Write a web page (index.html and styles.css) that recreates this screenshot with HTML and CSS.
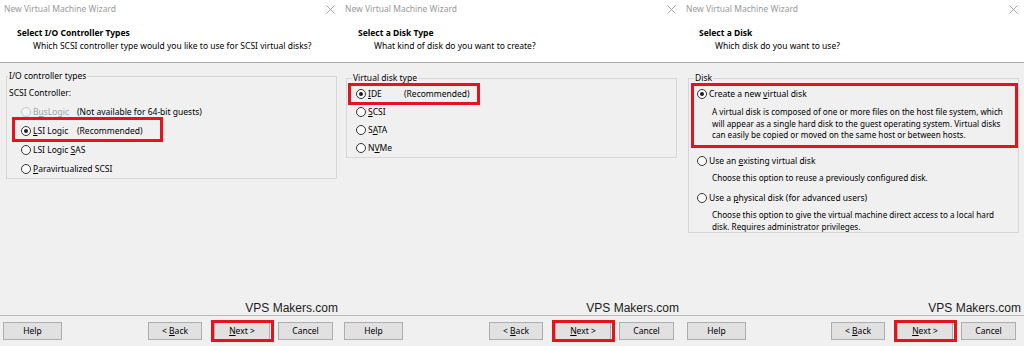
FILE: index.html
```html
<!DOCTYPE html>
<html>
<head>
<meta charset="utf-8">
<link rel="stylesheet" href="styles.css">
</head>
<body>
<div class="wizard">
  <section class="panel">
    <header class="head">
      <div class="titlebar"><span>New Virtual Machine Wizard</span><svg class="close" viewBox="0 0 9 9"><path d="M0.5 0.5L8.5 8.5M8.5 0.5L0.5 8.5" stroke="#8f8f8f" stroke-width="0.8" fill="none"/></svg></div>
      <h1>Select I/O Controller Types</h1>
      <p class="sub">Which SCSI controller type would you like to use for SCSI virtual disks?</p>
    </header>
    <main class="body">
      <fieldset class="group g-left">
        <legend>I/O controller types</legend>
        <div class="ctl-label">SCSI Controller:</div>
        <div class="row first disabled"><span class="rb"></span><span class="name">B<u>u</u>sLogic</span><span>(Not available for 64-bit guests)</span></div>
        <div class="row hl hl-lsi"><span class="rb on"></span><span class="name"><u>L</u>SI Logic</span><span>(Recommended)</span></div>
        <div class="row"><span class="rb"></span><span>LSI Logic <u>S</u>AS</span></div>
        <div class="row"><span class="rb"></span><span><u>P</u>aravirtualized SCSI</span></div>
      </fieldset>
    </main>
    <footer class="foot">
      <div class="brand">VPS Makers.com</div>
      <div class="bar">
        <button class="btn help">Help</button>
        <button class="btn back">&lt;&nbsp;<u>B</u>ack</button>
        <span class="hl hl-next"><button class="btn next"><u>N</u>ext&nbsp;&gt;</button></span>
        <button class="btn cancel">Cancel</button>
      </div>
    </footer>
  </section>

  <section class="panel">
    <header class="head">
      <div class="titlebar"><span>New Virtual Machine Wizard</span><svg class="close" viewBox="0 0 9 9"><path d="M0.5 0.5L8.5 8.5M8.5 0.5L0.5 8.5" stroke="#8f8f8f" stroke-width="0.8" fill="none"/></svg></div>
      <h1>Select a Disk Type</h1>
      <p class="sub">What kind of disk do you want to create?</p>
    </header>
    <main class="body mid">
      <fieldset class="group g-mid">
        <legend>Virtual disk type</legend>
        <div class="row first hl hl-ide"><span class="rb on"></span><span class="name"><u>I</u>DE</span><span>(Recommended)</span></div>
        <div class="row"><span class="rb"></span><span><u>S</u>CSI</span></div>
        <div class="row"><span class="rb"></span><span>S<u>A</u>TA</span></div>
        <div class="row"><span class="rb"></span><span>N<u>V</u>Me</span></div>
      </fieldset>
    </main>
    <footer class="foot">
      <div class="brand">VPS Makers.com</div>
      <div class="bar">
        <button class="btn help">Help</button>
        <button class="btn back">&lt;&nbsp;<u>B</u>ack</button>
        <span class="hl hl-next"><button class="btn next"><u>N</u>ext&nbsp;&gt;</button></span>
        <button class="btn cancel">Cancel</button>
      </div>
    </footer>
  </section>

  <section class="panel wide">
    <header class="head">
      <div class="titlebar"><span>New Virtual Machine Wizard</span><svg class="close" viewBox="0 0 9 9"><path d="M0.5 0.5L8.5 8.5M8.5 0.5L0.5 8.5" stroke="#8f8f8f" stroke-width="0.8" fill="none"/></svg></div>
      <h1>Select a Disk</h1>
      <p class="sub">Which disk do you want to use?</p>
    </header>
    <main class="body right">
      <fieldset class="group g-right">
        <legend>Disk</legend>
        <div class="opt o1 hl hl-new">
          <div class="row"><span class="rb on"></span><span>Create a new <u>v</u>irtual disk</span></div>
          <p class="desc">A virtual disk is composed of one or more files on the host file system, which<br>will appear as a single hard disk to the guest operating system. Virtual disks<br>can easily be copied or moved on the same host or between hosts.</p>
        </div>
        <div class="opt o2">
          <div class="row"><span class="rb"></span><span>Use an <u>e</u>xisting virtual disk</span></div>
          <p class="desc">Choose this option to reuse a previously configured disk.</p>
        </div>
        <div class="opt o3">
          <div class="row"><span class="rb"></span><span>Use a <u>p</u>hysical disk (for advanced users)</span></div>
          <p class="desc">Choose this option to give the virtual machine direct access to a local hard<br>disk. Requires administrator privileges.</p>
        </div>
      </fieldset>
    </main>
    <footer class="foot">
      <div class="brand">VPS Makers.com</div>
      <div class="bar">
        <button class="btn help">Help</button>
        <button class="btn back">&lt;&nbsp;<u>B</u>ack</button>
        <span class="hl hl-next"><button class="btn next"><u>N</u>ext&nbsp;&gt;</button></span>
        <button class="btn cancel">Cancel</button>
      </div>
    </footer>
  </section>
</div>
</body>
</html>
```

FILE: styles.css
```css
* { box-sizing: border-box; margin: 0; padding: 0; }
html, body { width: 1024px; height: 346px; overflow: hidden; }
body {
  background: #f0f0f0;
  font-family: "Noto Sans", "DejaVu Sans", sans-serif;
  font-size: 8.5px;
  line-height: 12px;
  color: #000;
}
u { text-decoration: underline; text-underline-offset: 1px; }

.wizard { display: flex; height: 346px; }
.panel { width: 341px; display: flex; flex-direction: column; background: #f0f0f0; }
.panel.wide { width: 342px; }

.head { flex: none; height: 63px; background: #fff; border-bottom: 1px solid #a9a9a9; }
.titlebar {
  height: 18px; display: flex; align-items: center; justify-content: space-between;
  padding: 0 6px 0 4px; color: #999;
}
.close { width: 9px; height: 9px; display: block; }
.head h1 { font-size: 8.5px; font-weight: bold; line-height: 12px; margin: 9px 0 0 17px; }
.head .sub { margin: 1px 0 0 33px; }

.body { flex: 1; padding: 0 4px 0 6px; }
.body.mid { padding: 0 5px 0 5px; }
.body.right { padding: 0 5px 0 6px; }

fieldset.group { border: 1px solid #d7d7d7; padding: 0; margin: 7px 0 0; min-width: 0; }
.g-mid, .g-right { margin-top: 9px !important; }
legend { padding: 0 1px; line-height: 12px; margin-left: 1px; }
.g-mid legend { margin-left: 5px; }
.g-right legend { margin-left: 5px; }

.ctl-label { margin: 5px 0 0 2px; }
.row { display: flex; align-items: center; white-space: nowrap; }
.g-left .row { height: 19px; margin-left: 14px; }
.g-left .row.first { margin-top: 3px; }
.g-left { padding-bottom: 3px; }
.g-left .name { width: 44px; }

.g-mid .row { height: 18px; margin-left: 9px; }
.g-mid .row.first { margin-top: 1px; }
.g-mid { padding-bottom: 7px; }
.g-mid .name { width: 36px; }

.rb {
  flex: none; width: 10px; height: 10px; border: 1px solid #333; border-radius: 50%;
  background: #fff; margin-right: 2px; display: flex; align-items: center; justify-content: center;
}
.rb.on::after { content: ""; width: 4px; height: 4px; border-radius: 50%; background: #1e1e1e; }
.disabled { color: #a3a3a3; }
.disabled .rb { border-color: #c4c4c4; background: #f4f4f4; }
.disabled .name ~ span { color: #000; }

.g-right { padding-bottom: 16px; }
.opt { margin-left: 8px; }
.opt .row { height: 18px; }
.o1 { margin-top: 1px; }
.o2 { margin-top: 11px; }
.o3 { margin-top: 6px; }
.desc { padding-left: 15px; font-size: 8.15px; line-height: 11.5px; white-space: nowrap; margin-top: 2px; }
.o1 .desc { margin-top: 3px; }

.hl { position: relative; }
.hl::after { content: ""; position: absolute; border: 3px solid #e5141c; pointer-events: none; }
.hl-lsi::after { top: -4px; bottom: -2px; left: -9px; width: 145px; }
.hl-ide::after { top: -2px; bottom: -2px; left: -8px; width: 126px; }
.hl-new::after { top: -2px; bottom: -7.5px; left: -6px; right: 0; }
.hl-next::after { top: -2px; bottom: -2px; left: -3px; right: -4px; }

.foot { flex: none; }
.brand {
  font-family: "Liberation Sans", Arial, sans-serif; font-size: 12px; line-height: 14px;
  text-align: right; padding-right: 3px; color: #1b1b1b;
}
.bar { border-top: 1px solid #b9b9b9; height: 31px; padding: 6px 8px 6px 3px; display: flex; }
.wide .bar { padding-left: 5px; }
.btn {
  height: 18px; width: 55px; border: 1px solid #adadad; background: #e1e1e1; color: #000;
  font: inherit; line-height: 12px; display: flex; align-items: center; justify-content: center;
}
.btn.help { width: 59px; }
.btn.back { margin-left: auto; width: 54px; }
.hl-next { margin-left: 12px; display: flex; }
.btn.next { width: 56px; }
.btn.cancel { margin-left: 8px; }
```
